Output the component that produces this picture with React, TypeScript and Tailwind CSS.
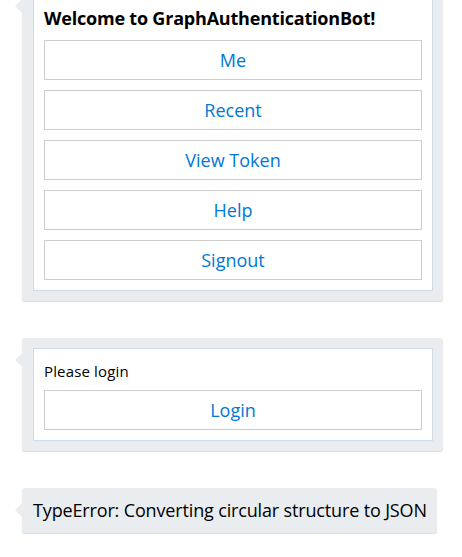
import React from "react"

const font = { fontFamily: '"Open Sans", "Noto Sans", sans-serif' }

function Pointer() {
  return (
    <div className="absolute left-[-7px] top-[15px] w-0 h-0 border-y-[7px] border-y-transparent border-r-[7px] border-r-[#e9edf0]" />
  )
}

function CardButton({ label }: { label: string }) {
  return (
    <button className="h-[40px] w-full border border-[#cccccc] bg-white text-[18px] text-[#0078d7]">
      {label}
    </button>
  )
}

export default function App() {
  const actions = ["Me", "Recent", "View Token", "Help", "Signout"]
  return (
    <div className="h-[557px] w-[462px] overflow-hidden bg-white text-black" style={font}>
      <div className="flex flex-col gap-[37px] pl-[22px] mt-[-16px]">
        {/* hero card */}
        <div className="relative w-[421px] bg-[#e9edf0] pl-[11px] pr-[10px] py-[10px] rounded-[3px] shadow-[0_1px_1px_rgba(0,0,0,0.15)]">
          <Pointer />
          <div className="w-[400px] border border-[#cfdbe6] bg-white px-[10px] pt-[12px] pb-[10px]">
            <div className="text-[18px] font-bold leading-[22px] tracking-[-0.2px] mb-[11px]">
              Welcome to GraphAuthenticationBot!
            </div>
            <div className="flex flex-col gap-[10px]">
              {actions.map((a) => (
                <CardButton key={a} label={a} />
              ))}
            </div>
          </div>
        </div>

        {/* signin card */}
        <div className="relative w-[421px] bg-[#e9edf0] pl-[11px] pr-[10px] py-[10px] rounded-[3px] shadow-[0_1px_1px_rgba(0,0,0,0.15)]">
          <Pointer />
          <div className="w-[400px] border border-[#cfdbe6] bg-white px-[10px] pt-[12px] pb-[10px]">
            <div className="text-[15px] leading-[20px] tracking-[0.15px] mb-[9px]">Please login</div>
            <CardButton label="Login" />
          </div>
        </div>

        {/* error message */}
        <div className="relative self-start bg-[#e9edf0] pl-[11px] pr-[10px] h-[45px] flex items-center rounded-[3px] shadow-[0_1px_1px_rgba(0,0,0,0.15)]">
          <Pointer />
          <span className="text-[18px] tracking-[-0.15px]">TypeError: Converting circular structure to JSON</span>
        </div>
      </div>
    </div>
  )
}
